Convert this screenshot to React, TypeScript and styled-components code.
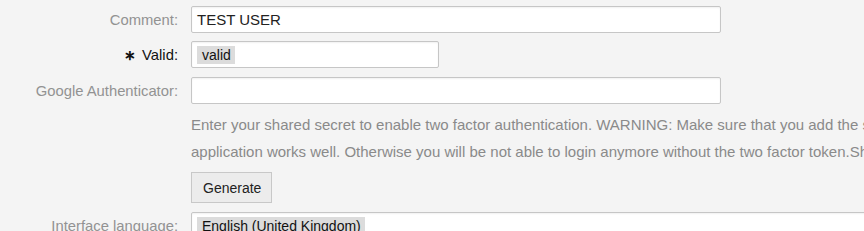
import React from 'react'
import styled, { createGlobalStyle } from 'styled-components'

const Global = createGlobalStyle`
  html, body {
    margin: 0;
    padding: 0;
    background: #f4f4f4;
    overflow: hidden;
  }
  body {
    font-family: "Liberation Sans", Arial, sans-serif;
    font-size: 15px;
  }
`

const Form = styled.div`
  padding-top: 6px;
  display: flex;
  flex-direction: column;
`

const Row = styled.div<{ $mb?: number }>`
  display: grid;
  grid-template-columns: 178px 1fr;
  column-gap: 13px;
  align-items: center;
  margin-bottom: ${(p) => p.$mb ?? 0}px;
`

const Label = styled.label<{ $required?: boolean }>`
  text-align: right;
  font-size: 14.8px;
  color: ${(p) => (p.$required ? '#111' : '#929292')};
  white-space: nowrap;
`

const Star = styled.span`
  font-weight: bold;
  margin-right: 6px;
  font-size: 14px;
`

const Field = styled.div<{ $width: number }>`
  box-sizing: border-box;
  width: ${(p) => p.$width}px;
  height: 27px;
  background: #fff;
  border: 1px solid #c6c6c6;
  border-radius: 2px;
  box-shadow: inset 0 1px 2px rgba(0, 0, 0, 0.06);
  display: flex;
  align-items: center;
  padding: 0 5px;
  color: #222;
  white-space: nowrap;
`

const Tag = styled.span`
  background: #dcdcdc;
  color: #111;
  font-size: 14px;
  padding: 0 4px 0 5px;
  line-height: 18px;
`

const Description = styled.div`
  grid-column: 2;
  color: #8a8a8a;
  line-height: 27px;
  white-space: nowrap;
  padding-top: 7px;
  margin-bottom: 7px;
`

const Button = styled.button`
  grid-column: 2;
  justify-self: start;
  box-sizing: border-box;
  height: 31px;
  padding: 0 10px 0 11px;
  background: #ececec;
  border: 1px solid #c8c8c8;
  border-radius: 0;
  font-family: inherit;
  font-size: 14px;
  color: #222;
`

export default function App() {
  return (
    <>
      <Global />
      <Form>
        <Row $mb={8}>
          <Label>Comment:</Label>
          <Field $width={530}>TEST USER</Field>
        </Row>
        <Row $mb={9}>
          <Label $required>
            <Star>∗</Star>Valid:
          </Label>
          <Field $width={248}>
            <Tag>valid</Tag>
          </Field>
        </Row>
        <Row>
          <Label>Google Authenticator:</Label>
          <Field $width={530} />
        </Row>
        <Row>
          <Description>
            Enter your shared secret to enable two factor authentication. WARNING: Make sure that you add the shared secret to your generator
            <br />
            application works well. Otherwise you will be not able to login anymore without the two factor token.Show
          </Description>
        </Row>
        <Row $mb={9}>
          <Button>Generate</Button>
        </Row>
        <Row>
          <Label>Interface language:</Label>
          <Field $width={700}>
            <Tag>English (United Kingdom)</Tag>
          </Field>
        </Row>
      </Form>
    </>
  )
}
